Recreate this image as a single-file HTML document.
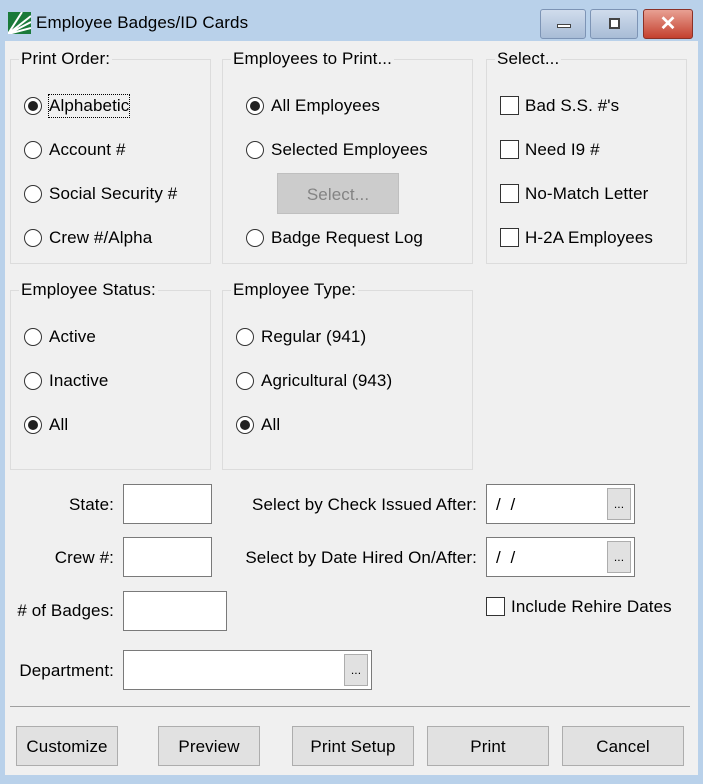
<!DOCTYPE html>
<html><head><style>
*{box-sizing:border-box;margin:0;padding:0}
body{width:703px;height:784px;background:#b9d1ea;font-family:"Liberation Sans",sans-serif;font-size:17px;color:#000;position:relative;overflow:hidden;letter-spacing:0.1px}
.a{position:absolute;white-space:nowrap}
.client{position:absolute;left:5px;top:41px;width:693px;height:734px;background:#f0f0f0}
.grp{position:absolute;border:1px solid #dcdcdc}
.grp .t{position:absolute;left:8px;top:-11px;background:#f0f0f0;padding:0 2px;line-height:20px}
.r{position:absolute;width:18px;height:18px;border:1px solid #333;border-radius:50%;background:#fff}
.r.on::after{content:"";position:absolute;left:3px;top:3px;width:10px;height:10px;border-radius:50%;background:#222}
.c{position:absolute;width:19px;height:19px;border:1px solid #333;background:#fff}
.tb{position:absolute;background:#fff;border:1px solid #7a7a7a}
.eb{position:absolute;top:3px;right:3px;width:24px;bottom:3px;background:#e1e1e1;border:1px solid #adadad;font-size:12px;text-align:center;line-height:30px}
.btn{position:absolute;top:726px;height:40px;background:#e1e1e1;border:1px solid #adadad;text-align:center;line-height:40px;font-size:17px}
.lbl{line-height:22px}
</style></head><body>
<div class="a" style="left:8px;top:12px;width:23px;height:22px;background:#1a7a3a;overflow:hidden">
<svg width="23" height="22"><path d="M0 22 L23 4 M0 22 L23 10 M0 22 L23 16 M0 22 L14 0" stroke="#fff" stroke-width="2"/></svg></div>
<div class="a" style="left:36px;top:13px;font-size:17px">Employee Badges/ID Cards</div>
<div class="a" style="left:540px;top:9px;width:46px;height:30px;border:1px solid #7d94b5;border-radius:3px;background:linear-gradient(#d0dcec,#a8bcd6)"><div style="position:absolute;left:16px;top:14px;width:14px;height:4px;background:#fff;border:1px solid #444"></div></div>
<div class="a" style="left:590px;top:9px;width:48px;height:30px;border:1px solid #7d94b5;border-radius:3px;background:linear-gradient(#d0dcec,#a8bcd6)"><div style="position:absolute;left:18px;top:8px;width:11px;height:11px;border:2px solid #444;background:#fff"></div></div>
<div class="a" style="left:643px;top:9px;width:50px;height:30px;border:1px solid #8b3127;border-radius:3px;background:linear-gradient(#e8a093,#c4402e);color:#fff;font-weight:bold;font-size:20px;text-align:center;line-height:28px">✕</div>
<div class="client"></div>

<div class="grp" style="left:10px;top:59px;width:201px;height:205px"><span class="t">Print Order:</span></div>
<div class="grp" style="left:222px;top:59px;width:251px;height:205px"><span class="t">Employees to Print...</span></div>
<div class="grp" style="left:486px;top:59px;width:201px;height:205px"><span class="t">Select...</span></div>
<div class="grp" style="left:10px;top:290px;width:201px;height:180px"><span class="t">Employee Status:</span></div>
<div class="grp" style="left:222px;top:290px;width:251px;height:180px"><span class="t">Employee Type:</span></div>

<div class="r on" style="left:24px;top:97px"></div><div class="a lbl" style="left:49px;top:95px;outline:1px dotted #000">Alphabetic</div>
<div class="r" style="left:24px;top:141px"></div><div class="a lbl" style="left:49px;top:139px">Account #</div>
<div class="r" style="left:24px;top:185px"></div><div class="a lbl" style="left:49px;top:183px">Social Security #</div>
<div class="r" style="left:24px;top:229px"></div><div class="a lbl" style="left:49px;top:227px">Crew #/Alpha</div>

<div class="r on" style="left:246px;top:97px"></div><div class="a lbl" style="left:271px;top:95px">All Employees</div>
<div class="r" style="left:246px;top:141px"></div><div class="a lbl" style="left:271px;top:139px">Selected Employees</div>
<div class="a" style="left:277px;top:173px;width:122px;height:41px;background:#ccc;border:1px solid #bfbfbf;color:#838383;text-align:center;line-height:41px">Select...</div>
<div class="r" style="left:246px;top:229px"></div><div class="a lbl" style="left:271px;top:227px">Badge Request Log</div>

<div class="c" style="left:500px;top:96px"></div><div class="a lbl" style="left:525px;top:95px">Bad S.S. #'s</div>
<div class="c" style="left:500px;top:140px"></div><div class="a lbl" style="left:525px;top:139px">Need I9 #</div>
<div class="c" style="left:500px;top:184px"></div><div class="a lbl" style="left:525px;top:183px">No-Match Letter</div>
<div class="c" style="left:500px;top:228px"></div><div class="a lbl" style="left:525px;top:227px">H-2A Employees</div>

<div class="r" style="left:24px;top:328px"></div><div class="a lbl" style="left:49px;top:326px">Active</div>
<div class="r" style="left:24px;top:372px"></div><div class="a lbl" style="left:49px;top:370px">Inactive</div>
<div class="r on" style="left:24px;top:416px"></div><div class="a lbl" style="left:49px;top:414px">All</div>

<div class="r" style="left:236px;top:328px"></div><div class="a lbl" style="left:261px;top:326px">Regular (941)</div>
<div class="r" style="left:236px;top:372px"></div><div class="a lbl" style="left:261px;top:370px">Agricultural (943)</div>
<div class="r on" style="left:236px;top:416px"></div><div class="a lbl" style="left:261px;top:414px">All</div>

<div class="a lbl" style="right:589px;top:494px">State:</div>
<div class="tb" style="left:123px;top:484px;width:89px;height:40px"></div>
<div class="a lbl" style="right:589px;top:547px">Crew #:</div>
<div class="tb" style="left:123px;top:537px;width:89px;height:40px"></div>
<div class="a lbl" style="right:589px;top:600px"># of Badges:</div>
<div class="tb" style="left:123px;top:591px;width:104px;height:40px"></div>
<div class="a lbl" style="right:589px;top:660px">Department:</div>
<div class="tb" style="left:123px;top:650px;width:249px;height:40px"><div class="eb">...</div></div>

<div class="a lbl" style="right:226px;top:494px">Select by Check Issued After:</div>
<div class="tb" style="left:486px;top:484px;width:149px;height:40px"><span class="a" style="left:9px;top:10px">/ &nbsp;/</span><div class="eb">...</div></div>
<div class="a lbl" style="right:226px;top:547px">Select by Date Hired On/After:</div>
<div class="tb" style="left:486px;top:537px;width:149px;height:40px"><span class="a" style="left:9px;top:10px">/ &nbsp;/</span><div class="eb">...</div></div>
<div class="c" style="left:486px;top:597px"></div><div class="a lbl" style="left:511px;top:596px">Include Rehire Dates</div>

<div class="a" style="left:10px;top:706px;width:680px;height:1px;background:#a0a0a0"></div>
<div class="btn" style="left:16px;width:102px">Customize</div>
<div class="btn" style="left:158px;width:102px">Preview</div>
<div class="btn" style="left:292px;width:122px">Print Setup</div>
<div class="btn" style="left:427px;width:122px">Print</div>
<div class="btn" style="left:562px;width:122px">Cancel</div>
</body></html>
